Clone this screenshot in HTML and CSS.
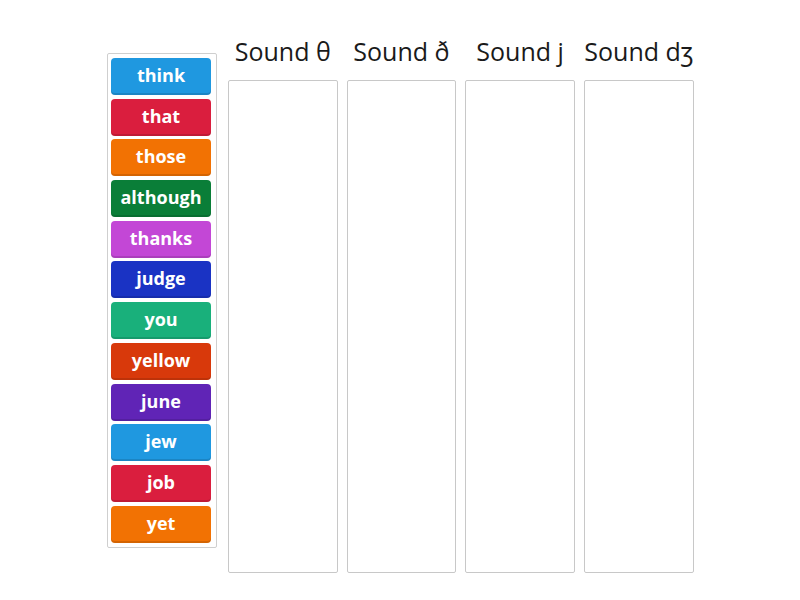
FILE: index.html
```html
<!DOCTYPE html>
<html>
<head>
<meta charset="utf-8">
<link rel="stylesheet" href="styles.css">
</head>
<body>
<div class="board">
  <div class="bank">
    <div class="tile c-blue">think</div>
    <div class="tile c-red">that</div>
    <div class="tile c-orange">those</div>
    <div class="tile c-green">although</div>
    <div class="tile c-pink">thanks</div>
    <div class="tile c-navy">judge</div>
    <div class="tile c-teal">you</div>
    <div class="tile c-rust">yellow</div>
    <div class="tile c-purple">june</div>
    <div class="tile c-blue">jew</div>
    <div class="tile c-red">job</div>
    <div class="tile c-orange">yet</div>
  </div>
  <div class="groups">
    <div class="group"><div class="title">Sound θ</div><div class="drop"></div></div>
    <div class="group"><div class="title">Sound ð</div><div class="drop"></div></div>
    <div class="group"><div class="title">Sound j</div><div class="drop"></div></div>
    <div class="group"><div class="title">Sound dʒ</div><div class="drop"></div></div>
  </div>
</div>
</body>
</html>
```
FILE: styles.css
```css
html, body {
  margin: 0;
  padding: 0;
  background: #ffffff;
  font-family: "Open Sans", "Noto Sans", sans-serif;
}
.board {
  display: flex;
  align-items: flex-start;
  margin: 32px 0 0 107px;
}
.bank {
  box-sizing: border-box;
  width: 110px;
  margin-top: 21px;
  padding: 4px 3px;
  border: 1px solid #cfcfcf;
  border-radius: 2px;
  display: flex;
  flex-direction: column;
  gap: 3.7px;
}
.tile {
  height: 37px;
  width: 100px;
  border-radius: 4px;
  color: #ffffff;
  font-weight: 700;
  font-size: 18px;
  line-height: 35px;
  text-align: center;
  box-shadow: inset 0 -2px 0 rgba(0,0,0,0.12);
  box-sizing: border-box;
}
.c-blue { background: #1f98e0; }
.c-red { background: #da1e3e; }
.c-orange { background: #f27203; }
.c-green { background: #0a7e38; }
.c-pink { background: #c347d6; }
.c-navy { background: #1a33c4; }
.c-teal { background: #19b07b; }
.c-rust { background: #d8390b; }
.c-purple { background: #6024b6; }
.groups {
  display: flex;
  gap: 9.2px;
  margin-left: 11px;
}
.group {
  width: 109.5px;
  display: flex;
  flex-direction: column;
  align-items: stretch;
}
.title {
  font-size: 25px;
  line-height: 33px;
  padding-top: 3px;
  color: #1a1a1a;
  text-align: center;
  white-space: nowrap;
  margin: 0 -10px 12px;
}
.drop {
  box-sizing: border-box;
  height: 493px;
  border: 1px solid #c8c8c8;
  border-radius: 2px;
}
```
